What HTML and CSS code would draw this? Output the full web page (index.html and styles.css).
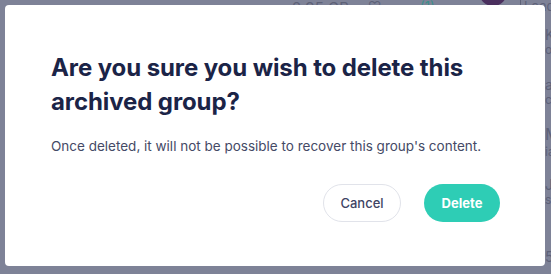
FILE: index.html
```html
<!DOCTYPE html>
<html>
<head>
<meta charset="utf-8">
<link rel="stylesheet" href="styles.css">
</head>
<body>
<div class="behind">
  <span class="bg-size">2.95 GB</span>
  <span class="bg-heart">♡</span>
  <span class="bg-badge">(1)</span>
  <span class="bg-avatar"></span>
  <span class="bg-load">Load</span>
  <div class="bg-side">
    <span class="s1">K</span>
    <span class="s2">o</span>
    <span class="s3">a</span>
    <span class="s4">ct</span>
    <span class="s5">M</span>
    <span class="s6">ia</span>
    <span class="s7">J</span>
    <span class="s8">st</span>
    <span class="s9">5</span>
  </div>
</div>
<div class="modal">
  <h1 class="title">Are you sure you wish to delete this archived group?</h1>
  <p class="message">Once deleted, it will not be possible to recover this group's content.</p>
  <div class="actions">
    <button class="btn btn-cancel">Cancel</button>
    <button class="btn btn-delete">Delete</button>
  </div>
</div>
</body>
</html>
```
FILE: styles.css
```css
html, body {
  margin: 0;
  padding: 0;
}
body {
  width: 551px;
  height: 274px;
  background: #7e8297;
  overflow: hidden;
  position: relative;
  font-family: "Inter", "Lato", sans-serif;
}
.behind {
  position: absolute;
  inset: 0;
  color: #5d6177;
  font-size: 13px;
}
.behind span {
  position: absolute;
}
.bg-size {
  left: 292px;
  top: 0;
  font-size: 15px;
  line-height: 15px;
}
.bg-heart {
  left: 368px;
  top: 0;
  line-height: 13px;
}
.bg-badge {
  left: 420px;
  top: 0;
  line-height: 13px;
  color: #3b8f8a;
}
.bg-avatar {
  left: 479px;
  top: -22px;
  width: 28px;
  height: 28px;
  border-radius: 50%;
  background: #4a2f5e;
}
.bg-load {
  left: 520px;
  top: 0;
  line-height: 13px;
  border-left: 1px solid #5d6177;
  padding-left: 3px;
}
.bg-side span {
  left: 545px;
  font-size: 14px;
}
.bg-side .s1 { top: 26px; }
.bg-side .s2 { top: 42px; font-size: 12px; }
.bg-side .s3 { top: 76px; }
.bg-side .s4 { top: 92px; font-size: 12px; }
.bg-side .s5 { top: 124px; font-size: 16px; }
.bg-side .s6 { top: 144px; font-size: 12px; }
.bg-side .s7 { top: 176px; }
.bg-side .s8 { top: 192px; font-size: 12px; }
.bg-side .s9 { top: 248px; }

.modal {
  position: absolute;
  left: 5px;
  top: 5px;
  width: 540px;
  height: 261px;
  box-sizing: border-box;
  background: #ffffff;
  border-radius: 4px;
  padding: 46px 45px 0 46px;
  display: flex;
  flex-direction: column;
}
.title {
  margin: 0;
  font-size: 24px;
  line-height: 34px;
  font-weight: 700;
  color: #1b2447;
  letter-spacing: -0.1px;
  max-width: 420px;
}
.message {
  margin: 17px 0 0;
  font-size: 13.5px;
  line-height: 20px;
  color: #454a66;
}
.actions {
  margin-top: 28px;
  display: flex;
  justify-content: flex-end;
  gap: 23px;
}
.btn {
  height: 38px;
  border-radius: 19px;
  font-family: inherit;
  font-size: 13px;
  cursor: pointer;
  padding: 0;
}
.btn-cancel {
  width: 78px;
  background: #ffffff;
  border: 1px solid #e1e3ea;
  color: #3e4463;
  font-weight: 500;
}
.btn-delete {
  width: 76px;
  background: #2ecdb5;
  border: none;
  color: #ffffff;
  font-weight: 700;
}
```
